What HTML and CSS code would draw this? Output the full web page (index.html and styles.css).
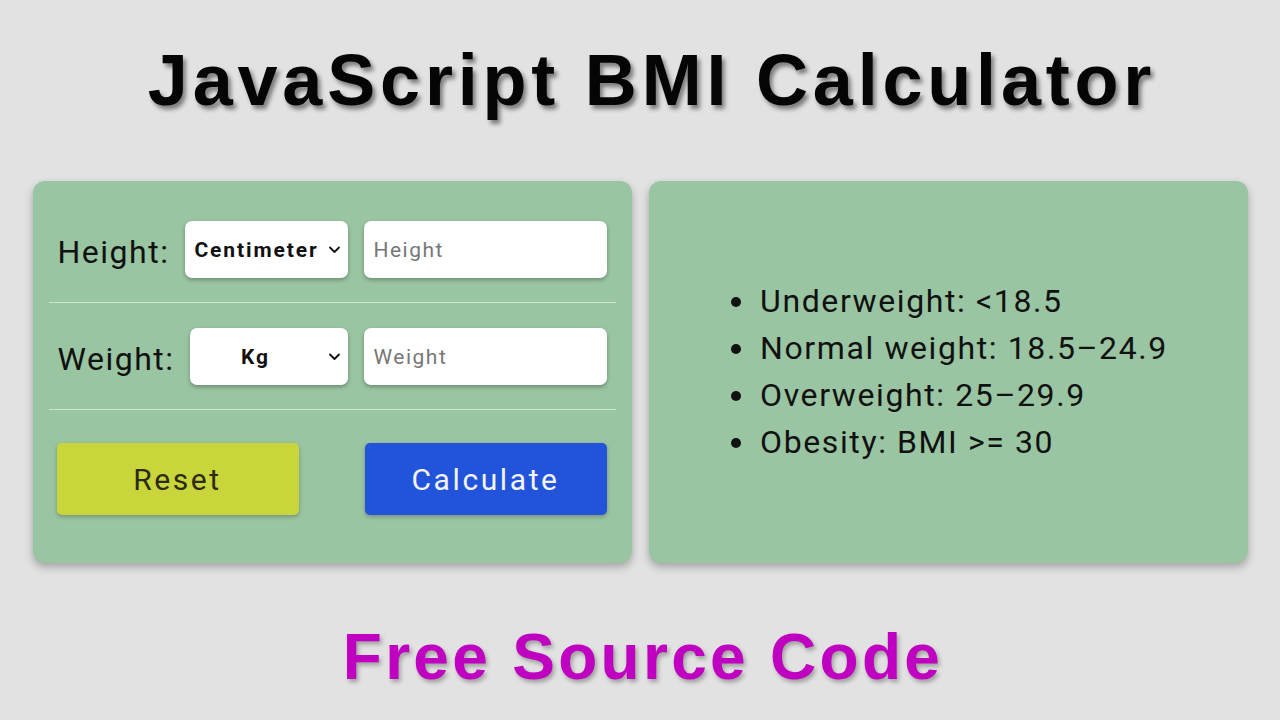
FILE: index.html
```html
<!DOCTYPE html>
<html lang="en">
<head>
<meta charset="utf-8">
<title>JavaScript BMI Calculator</title>
<link rel="stylesheet" href="styles.css">
</head>
<body>
  <h1 class="title">JavaScript BMI Calculator</h1>
  <main class="cards">
    <section class="card calc">
      <div class="row">
        <label class="label" for="height">Height:</label>
        <div class="select-wrap">
          <select class="select">
            <option>Centimeter</option>
            <option>Meter</option>
            <option>Feet</option>
          </select>
          <svg class="chev" viewBox="0 0 12 8" width="13" height="8"><path d="M1.5 1.5 L6 6 L10.5 1.5" fill="none" stroke="#111" stroke-width="1.8" stroke-linecap="round" stroke-linejoin="round"/></svg>
        </div>
        <input class="field" id="height" type="text" placeholder="Height">
      </div>
      <div class="row row2">
        <label class="label" for="weight">Weight:</label>
        <div class="select-wrap">
          <select class="select center">
            <option>Kg</option>
            <option>Pound</option>
          </select>
          <svg class="chev" viewBox="0 0 12 8" width="13" height="8"><path d="M1.5 1.5 L6 6 L10.5 1.5" fill="none" stroke="#111" stroke-width="1.8" stroke-linecap="round" stroke-linejoin="round"/></svg>
        </div>
        <input class="field" id="weight" type="text" placeholder="Weight">
      </div>
      <div class="actions">
        <button class="btn reset" type="button">Reset</button>
        <button class="btn calculate" type="button">Calculate</button>
      </div>
    </section>
    <section class="card info">
      <ul class="ranges">
        <li>Underweight: &lt;18.5</li>
        <li>Normal weight: 18.5–24.9</li>
        <li>Overweight: 25–29.9</li>
        <li>Obesity: BMI &gt;= 30</li>
      </ul>
    </section>
  </main>
  <p class="footer">Free Source Code</p>
</body>
</html>
```
FILE: styles.css
```css
* { box-sizing: border-box; }

body {
  margin: 0;
  background: #e2e2e2;
  font-family: Roboto, "Liberation Sans", Arial, sans-serif;
  color: #111;
}

.title {
  margin: 0;
  padding: 39px 0 0 24px;
  text-align: center;
  font-family: "Liberation Sans", Arial, sans-serif;
  font-weight: 700;
  font-size: 72px;
  line-height: 83px;
  letter-spacing: 4.8px;
  color: #050505;
  text-shadow: 3px 4px 4px rgba(0, 0, 0, 0.45);
}

.cards {
  width: 1215px;
  margin: 59px auto 0;
  display: grid;
  grid-template-columns: 1fr 1fr;
  gap: 17px;
}

.card {
  background: #9ac5a2;
  border-radius: 12px;
  box-shadow: 0 4px 8px rgba(0, 0, 0, 0.28);
  height: 382px;
}

.calc {
  padding: 16px;
}

.row {
  display: grid;
  grid-template-columns: auto 1fr 243px;
  align-items: center;
  column-gap: 16px;
  padding: 24px 9px 24px 9px;
  border-bottom: 1px solid rgba(255, 255, 255, 0.55);
}

.row2 {
  padding-top: 25px;
}

.label {
  font-size: 32px;
  letter-spacing: 1.5px;
  color: #111;
  padding-top: 4px;
}

.select-wrap {
  position: relative;
  height: 57px;
}

.select {
  appearance: none;
  -webkit-appearance: none;
  width: 100%;
  height: 57px;
  border: none;
  border-radius: 7px;
  background: #fff;
  box-shadow: 0 2px 4px rgba(0, 0, 0, 0.3);
  font-family: Roboto, sans-serif;
  font-weight: 700;
  font-size: 21px;
  letter-spacing: 1.9px;
  color: #111;
  padding: 0 24px 0 9px;
  outline: none;
}

.select.center {
  text-align: center;
  text-align-last: center;
  padding-right: 36px;
}

.chev {
  position: absolute;
  right: 7px;
  top: 25px;
  pointer-events: none;
}

.field {
  height: 57px;
  width: 243px;
  border: none;
  border-radius: 7px;
  background: #fff;
  box-shadow: 0 2px 4px rgba(0, 0, 0, 0.3);
  font-family: Roboto, sans-serif;
  font-size: 21px;
  letter-spacing: 1.5px;
  padding: 0 10px;
  color: #111;
  outline: none;
}

.field::placeholder {
  color: #777;
}

.actions {
  display: flex;
  justify-content: space-between;
  padding: 33px 9px 0 8px;
}

.btn {
  width: 242px;
  height: 72px;
  border: none;
  border-radius: 5px;
  box-shadow: 0 2px 4px rgba(0, 0, 0, 0.25);
  font-family: Roboto, sans-serif;
  font-size: 30px;
  letter-spacing: 2.6px;
  cursor: pointer;
}

.reset {
  background: #c9d63b;
  color: #2d2a12;
}

.calculate {
  background: #2153db;
  color: #f4f4f4;
}

.info {
  display: flex;
  align-items: center;
  justify-content: center;
  padding-right: 10px;
}

.ranges {
  margin: 0;
  padding-left: 40px;
  font-size: 32px;
  line-height: 47px;
  letter-spacing: 1.6px;
  color: #111;
}

.ranges li {
  padding-left: 2px;
}

.footer {
  margin: 57px 0 0;
  padding-left: 6px;
  text-align: center;
  font-family: "Liberation Sans", Arial, sans-serif;
  font-weight: 700;
  font-size: 64px;
  line-height: 74px;
  letter-spacing: 3.3px;
  color: #c000c0;
  text-shadow: 2px 3px 4px rgba(0, 0, 0, 0.3);
}
```
